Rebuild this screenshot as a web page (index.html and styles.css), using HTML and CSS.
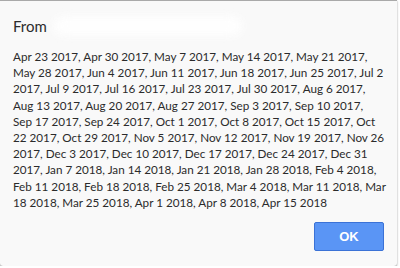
FILE: index.html
```html
<!DOCTYPE html>
<html lang="en">
<head>
    <meta charset="UTF-8">
    <meta name="viewport" content="width=device-width, initial-scale=1.0">
    <title>From</title>
    <link rel="stylesheet" href="styles.css">
</head>
<body>

    <!-- Alert Dialog -->
    <div class="dialog">
        <div class="dialog-title">
            <span>From</span>
            <span class="origin"></span>
        </div>
        <p class="dialog-message">
            Apr 23 2017, Apr 30 2017, May 7 2017, May 14 2017, May 21 2017,<br>
            May 28 2017, Jun 4 2017, Jun 11 2017, Jun 18 2017, Jun 25 2017, Jul 2<br>
            2017, Jul 9 2017, Jul 16 2017, Jul 23 2017, Jul 30 2017, Aug 6 2017,<br>
            Aug 13 2017, Aug 20 2017, Aug 27 2017, Sep 3 2017, Sep 10 2017,<br>
            Sep 17 2017, Sep 24 2017, Oct 1 2017, Oct 8 2017, Oct 15 2017, Oct<br>
            22 2017, Oct 29 2017, Nov 5 2017, Nov 12 2017, Nov 19 2017, Nov 26<br>
            2017, Dec 3 2017, Dec 10 2017, Dec 17 2017, Dec 24 2017, Dec 31<br>
            2017, Jan 7 2018, Jan 14 2018, Jan 21 2018, Jan 28 2018, Feb 4 2018,<br>
            Feb 11 2018, Feb 18 2018, Feb 25 2018, Mar 4 2018, Mar 11 2018, Mar<br>
            18 2018, Mar 25 2018, Apr 1 2018, Apr 8 2018, Apr 15 2018
        </p>
        <div class="dialog-buttons">
            <button type="button" class="ok-button">OK</button>
        </div>
    </div>

</body>
</html>
```

FILE: styles.css
```css
/* Basic Reset */
* {
    margin: 0;
    padding: 0;
    box-sizing: border-box;
}

body {
    font-family: 'Lato', 'Liberation Sans', sans-serif;
    color: #222;
    background: #fff;
    overflow: hidden;
}

/* Dialog */
.dialog {
    width: 397px;
    height: 266px;
    background: #f9f9f9;
    border-top: 1px solid #a9a9a9;
    border-radius: 0 0 3px 3px;
    box-shadow: 0 1px 2px rgba(0, 0, 0, 0.45);
    padding: 0 13px;
    display: flex;
    flex-direction: column;
}

.dialog-title {
    display: flex;
    align-items: center;
    gap: 6px;
    height: 40px;
    padding-top: 10px;
    font-size: 15px;
    color: #2b2b2b;
}

.origin {
    width: 190px;
    height: 20px;
    border-radius: 12px;
    background: #fefefe;
    filter: blur(5px);
}

.dialog-message {
    margin-top: 7px;
    font-size: 11.7px;
    line-height: 16.2px;
    color: #2b2b2b;
    white-space: nowrap;
}

.dialog-buttons {
    display: flex;
    justify-content: flex-end;
    margin-top: auto;
    padding-bottom: 15px;
}

.ok-button {
    width: 70px;
    height: 29px;
    background: #5a95f5;
    border: 1px solid #3b72d6;
    border-radius: 2px;
    color: #fff;
    font-family: 'Liberation Sans', sans-serif;
    font-size: 13px;
    font-weight: bold;
    cursor: pointer;
}
```
